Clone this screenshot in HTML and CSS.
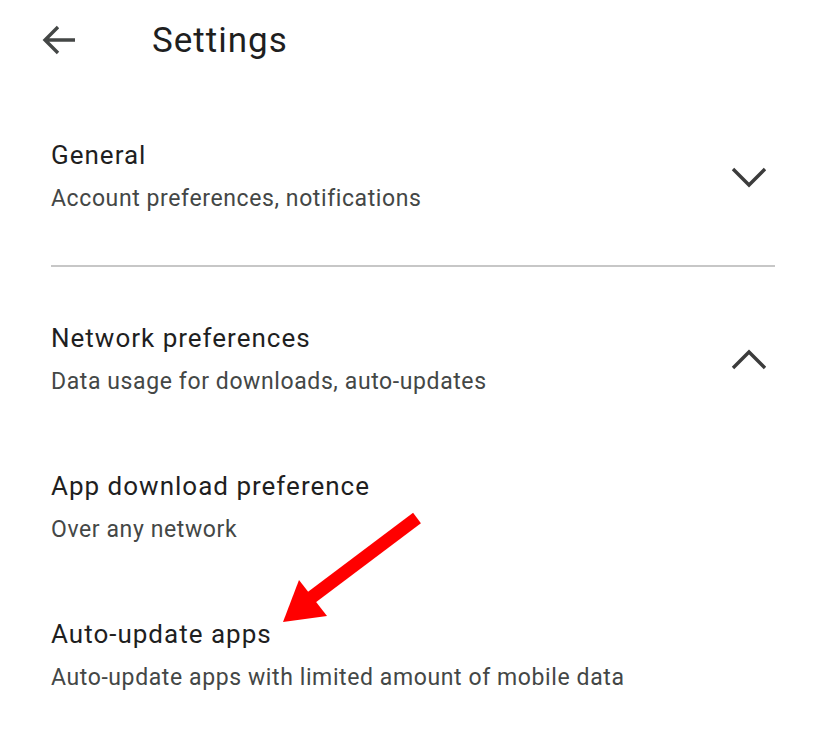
FILE: index.html
```html
<!DOCTYPE html>
<html lang="en">
<head>
    <meta charset="UTF-8">
    <meta name="viewport" content="width=device-width, initial-scale=1.0">
    <title>Settings</title>
    <link rel="stylesheet" href="styles.css">
</head>
<body>
    <!-- Top bar -->
    <header class="topbar">
        <svg class="back-icon" width="36" height="32" viewBox="0 0 36 32">
            <path d="M34 16H4M17 3L4 16L17 29" fill="none" stroke="#444746" stroke-width="3.4" stroke-linejoin="miter"/>
        </svg>
        <h1>Settings</h1>
    </header>

    <main class="page">
        <!-- General -->
        <section class="group group-first">
            <div class="row">
                <div class="texts">
                    <div class="title">General</div>
                    <div class="subtitle">Account preferences, notifications</div>
                </div>
                <svg class="chevron" width="36" height="24" viewBox="0 0 36 24">
                    <polyline points="2,4 18,20 34,4" fill="none" stroke="#3c3c3c" stroke-width="3.4"/>
                </svg>
            </div>
        </section>

        <hr class="divider">

        <!-- Network preferences -->
        <section class="group">
            <div class="row">
                <div class="texts">
                    <div class="title">Network preferences</div>
                    <div class="subtitle">Data usage for downloads, auto-updates</div>
                </div>
                <svg class="chevron" width="36" height="24" viewBox="0 0 36 24">
                    <polyline points="2,20 18,4 34,20" fill="none" stroke="#3c3c3c" stroke-width="3.4"/>
                </svg>
            </div>

            <div class="item">
                <div class="title">App download preference</div>
                <div class="subtitle">Over any network</div>
            </div>

            <div class="item">
                <div class="title">Auto-update apps</div>
                <div class="subtitle">Auto-update apps with limited amount of mobile data</div>
            </div>
        </section>
    </main>

    <!-- annotation arrow -->
    <svg class="callout" width="160" height="130" viewBox="270 500 160 130">
        <line x1="417" y1="518" x2="308" y2="600" stroke="#ff0000" stroke-width="13"/>
        <polygon points="283,622 299,580 327,616" fill="#ff0000"/>
    </svg>
</body>
</html>
```

FILE: styles.css
```css
body {
    margin: 0;
    background: #ffffff;
    font-family: Roboto, "Open Sans", sans-serif;
    color: #1f1f1f;
}
.topbar {
    height: 80px;
    display: flex;
    align-items: center;
    padding-left: 41px;
}
.topbar h1 {
    margin: 0 0 0 75px;
    font-size: 35px;
    font-weight: 400;
    letter-spacing: 1px;
    color: #1f1f1f;
}
.back-icon {
    display: block;
}
.page {
    padding: 0 50px 0 51px;
}
.group {
    padding-top: 53px;
}
.group-first {
    padding-top: 57px;
    padding-bottom: 48px;
}
.row {
    display: flex;
    align-items: center;
    justify-content: space-between;
}
.chevron {
    display: block;
    margin-right: 8px;
}
.title {
    font-size: 26px;
    line-height: 36px;
    letter-spacing: 1px;
    color: #1f1f1f;
}
.subtitle {
    margin-top: 8px;
    font-size: 23px;
    line-height: 36px;
    letter-spacing: 0.6px;
    color: #444746;
}
.item {
    padding-top: 68px;
}
.divider {
    margin: 0;
    border: none;
    height: 2px;
    background: #c7c7c7;
}
.callout {
    position: absolute;
    left: 270px;
    top: 500px;
    pointer-events: none;
}
```
